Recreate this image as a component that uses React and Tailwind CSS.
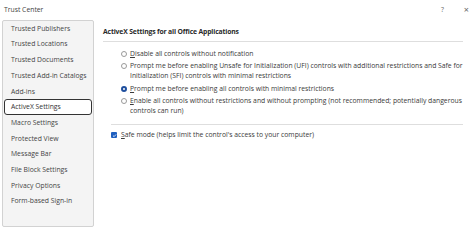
import React from "react";

const sideItems = [
  "Trusted Publishers",
  "Trusted Locations",
  "Trusted Documents",
  "Trusted Add-in Catalogs",
  "Add-ins",
  "ActiveX Settings",
  "Macro Settings",
  "Protected View",
  "Message Bar",
  "File Block Settings",
  "Privacy Options",
  "Form-based Sign-in",
];

function Radio({ checked }) {
  return checked ? (
    <span className="mt-[2px] w-[6px] h-[6px] shrink-0 rounded-full border-[2px] border-[#1f4f9e] bg-white" />
  ) : (
    <span className="mt-[2px] w-[6px] h-[6px] shrink-0 rounded-full border border-[#9a9a9a] bg-white" />
  );
}

function Option({ checked, children }) {
  return (
    <div className="flex items-start gap-[3px]">
      <Radio checked={checked} />
      <div className="leading-[10px] whitespace-nowrap">{children}</div>
    </div>
  );
}

export default function App() {
  return (
    <div
      className="w-[474px] h-[229px] bg-white overflow-hidden text-[6.8px] text-[#3a3a3a]"
      style={{ fontFamily: '"Open Sans", "Noto Sans", sans-serif' }}
    >
      <div className="h-[20px] flex items-center justify-between pl-[4px] pr-[5px]">
        <span className="text-[#444]">Trust Center</span>
        <div className="flex items-center gap-[20px] text-[#666]">
          <span>?</span>
          <span className="text-[9px]">×</span>
        </div>
      </div>

      <div className="flex h-[209px]">
        <div className="shrink-0 ml-[2px] w-[92px] h-[207px] border border-[#d2d2d2] bg-[#f4f4f4] rounded-[2px]">
          {sideItems.map((item) =>
            item === "ActiveX Settings" ? (
              <div
                key={item}
                className="mx-[1px] h-[15.7px] flex items-center pl-[6px] bg-white border border-[#333] rounded-[3px] text-[#333] whitespace-nowrap"
              >
                {item}
              </div>
            ) : (
              <div key={item} className="h-[15.7px] flex items-center pl-[8px] text-[#444] whitespace-nowrap">
                {item}
              </div>
            )
          )}
        </div>

        <div className="flex-1 min-w-0 pl-[9px] pr-[11px] pt-[6.5px]">
          <div className="font-bold leading-[10px] text-[#2a2a2a] tracking-[-0.15px] whitespace-nowrap">
            ActiveX Settings for all Office Applications
          </div>
          <div className="mt-[4px] border-t border-[#dedede]" />

          <div className="pl-[18px] mt-[7px] flex flex-col gap-[2.5px]">
            <Option>
              <span className="underline">D</span>isable all controls without notification
            </Option>
            <Option>
              Prompt me before enabling Unsafe for Initialization (UFI) controls with additional restrictions and Safe for
              <br />
              Initialization (SFI) controls with minimal restrictions
            </Option>
            <Option checked>
              <span className="underline">P</span>rompt me before enabling all controls with minimal restrictions
            </Option>
            <Option>
              <span className="underline">E</span>nable all controls without restrictions and without prompting (not recommended; potentially dangerous
              <br />
              controls can run)
            </Option>
          </div>

          <div className="ml-[8px] mt-[7.5px] border-t border-[#dedede]" />

          <div className="ml-[8px] mt-[5.5px] flex items-center gap-[4px]">
            <span className="w-[6px] h-[6px] rounded-[1px] bg-[#1f5fbf] flex items-center justify-center">
              <svg width="5" height="5" viewBox="0 0 10 10" fill="none">
                <path d="M2 5.2 L4.2 7.3 L8.2 2.8" stroke="white" strokeWidth="1.6" />
              </svg>
            </span>
            <span className="leading-[10px] whitespace-nowrap">
              <span className="underline">S</span>afe mode (helps limit the control's access to your computer)
            </span>
          </div>
        </div>
      </div>
    </div>
  );
}
